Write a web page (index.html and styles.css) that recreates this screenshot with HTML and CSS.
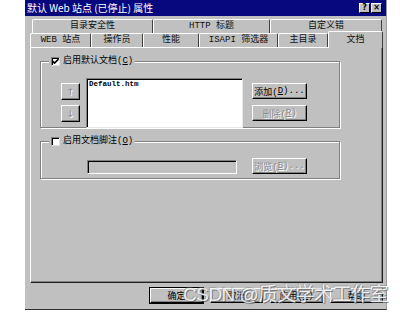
FILE: index.html
```html
<!DOCTYPE html>
<html>
<head>
<meta charset="utf-8">
<link rel="stylesheet" href="styles.css">
</head>
<body>
<div class="dialog">
  <div class="titlebar">
    <span class="title">默认 Web 站点 (已停止) 属性</span>
    <div class="tbtns"><span class="tbtn">?</span><span class="tbtn">×</span></div>
  </div>
  <div class="content">
    <div class="row row1">
      <div class="tab">目录安全性</div>
      <div class="tab">HTTP 标题</div>
      <div class="tab">自定义错</div>
    </div>
    <div class="row row2">
      <div class="tab">WEB 站点</div>
      <div class="tab">操作员</div>
      <div class="tab">性能</div>
      <div class="tab">ISAPI 筛选器</div>
      <div class="tab">主目录</div>
      <div class="tab sel">文挡</div>
    </div>
    <div class="panel">
      <div class="group g1">
        <div class="legend"><span class="cb"><svg width="7" height="7" viewBox="0 0 7 7"><path d="M0.5 3 L2.5 5 L6.5 1" fill="none" stroke="#000" stroke-width="1.6"/></svg></span><span class="ltext">启用默认文档(<u>C</u>)</span></div>
        <div class="g1body">
          <div class="arrows">
            <div class="btn abtn dis">↑</div>
            <div class="btn abtn dis">↓</div>
          </div>
          <div class="list">Default.htm</div>
          <div class="side">
            <div class="btn sbtn">添加(<u>D</u>)...</div>
            <div class="btn sbtn dis">删除(<u>R</u>)</div>
          </div>
        </div>
      </div>
      <div class="group g2">
        <div class="legend"><span class="cb"></span><span class="ltext">启用文档脚注(<u>O</u>)</span></div>
        <div class="g2body">
          <div class="field"></div>
          <div class="btn sbtn dis">浏览(<u>B</u>)...</div>
        </div>
      </div>
    </div>
    <div class="footer">
      <div class="btn fbtn def">确定</div>
      <div class="btn fbtn">取消</div>
      <div class="btn fbtn">应用(<u>A</u>)</div>
      <div class="btn fbtn">帮助</div>
    </div>
  </div>
  <div class="watermark">CSDN @质文学术工作室</div>
</div>
</body>
</html>
```

FILE: styles.css
```css
html, body {
  margin: 0;
  padding: 0;
  background: #ffffff;
}
body {
  width: 400px;
  height: 315px;
  overflow: hidden;
  font-family: "Liberation Mono", "Noto Sans CJK SC", monospace;
  font-size: 9px;
  color: #000;
}
.dialog {
  position: relative;
  margin-left: 25px;
  width: 362px;
  height: 310px;
  box-sizing: border-box;
  background: #c0c0c0;
  border-bottom: 1px solid #303030;
  border-right: 1px solid #9a9a9a;
}
.titlebar {
  height: 16px;
  background: #08087e;
  display: flex;
  align-items: center;
  justify-content: space-between;
  padding: 0 4px 0 2px;
}
.title {
  color: #fff;
  font-family: "Noto Sans CJK SC", sans-serif;
  font-size: 10px;
  line-height: 16px;
  white-space: nowrap;
}
.tbtns {
  display: flex;
  gap: 1px;
}
.tbtn {
  width: 11px;
  height: 10px;
  box-sizing: border-box;
  background: #c0c0c0;
  border-top: 1px solid #fff;
  border-left: 1px solid #fff;
  border-right: 1px solid #000;
  border-bottom: 1px solid #000;
  font-family: "DejaVu Sans", sans-serif;
  font-weight: bold;
  font-size: 8px;
  line-height: 8px;
  text-align: center;
}
.content {
  padding: 3px 0 0 5px;
}
.row {
  display: grid;
  height: 14px;
}
.row1 {
  margin-left: 2px;
  width: 350px;
  grid-template-columns: 121px 117px 112px;
}
.row2 {
  width: 353px;
  grid-template-columns: 61px 52px 56px 79px 50px 55px;
  position: relative;
  z-index: 2;
}
.tab {
  box-sizing: border-box;
  height: 14px;
  border-top: 1px solid #fff;
  border-left: 1px solid #fff;
  border-right: 1px solid #404040;
  border-top-left-radius: 2px;
  border-top-right-radius: 2px;
  text-align: center;
  line-height: 13px;
  white-space: nowrap;
  color: #111;
}
.tab.sel {
  height: 17px;
  margin-top: -2px;
  background: #c0c0c0;
  padding-top: 2px;
  line-height: 12px;
}
.panel {
  box-sizing: border-box;
  width: 353px;
  height: 236px;
  border-top: 1px solid #fff;
  border-left: 1px solid #fff;
  border-right: 1px solid #202020;
  border-bottom: 1px solid #202020;
  box-shadow: inset -1px -1px 0 #808080;
  padding: 13px 0 0 9px;
}
.group {
  box-sizing: border-box;
  width: 300px;
  border: 1px solid #808080;
  box-shadow: inset 1px 1px 0 #fff, 1px 1px 0 #fff;
}
.g1 {
  height: 67px;
}
.g2 {
  height: 38px;
  margin-top: 13px;
}
.legend {
  display: inline-flex;
  align-items: center;
  height: 12px;
  margin-top: -7px;
  margin-left: 8px;
  padding: 0 2px;
  gap: 3px;
  background: #c0c0c0;
  vertical-align: top;
}
.cb {
  width: 9px;
  height: 9px;
  box-sizing: border-box;
  background: #fff;
  border-top: 1px solid #808080;
  border-left: 1px solid #808080;
  border-right: 1px solid #e0e0e0;
  border-bottom: 1px solid #e0e0e0;
  box-shadow: inset 1px 1px 0 #000;
  display: flex;
  align-items: center;
  justify-content: center;
}
.ltext {
  line-height: 12px;
  white-space: nowrap;
}
.g1body {
  display: flex;
  align-items: flex-start;
}
.arrows {
  display: flex;
  flex-direction: column;
  gap: 5px;
  margin: 11px 0 0 20px;
}
.btn {
  box-sizing: border-box;
  background: #c0c0c0;
  border-top: 1px solid #fff;
  border-left: 1px solid #fff;
  border-right: 1px solid #000;
  border-bottom: 1px solid #000;
  box-shadow: inset -1px -1px 0 #808080;
  display: flex;
  align-items: center;
  justify-content: center;
  white-space: nowrap;
}
.dis {
  color: #8a8a8a;
  text-shadow: 1px 1px 0 #fff;
}
.abtn {
  width: 19px;
  height: 17px;
  font-family: "DejaVu Sans", sans-serif;
  font-size: 9px;
}
.list {
  box-sizing: border-box;
  width: 157px;
  height: 50px;
  margin: 6px 0 0 6px;
  background: #fff;
  border-top: 1px solid #808080;
  border-left: 1px solid #808080;
  border-right: 1px solid #e8e8e8;
  border-bottom: 1px solid #e8e8e8;
  box-shadow: inset 1px 1px 0 #000;
  padding: 1px 0 0 2px;
  font-family: "Liberation Mono", monospace;
  font-weight: bold;
  font-size: 7.5px;
  line-height: 9px;
}
.side {
  display: flex;
  flex-direction: column;
  gap: 6px;
  margin: 11px 0 0 9px;
}
.sbtn {
  width: 55px;
  height: 16px;
}
.g2body {
  display: flex;
  align-items: flex-start;
  margin-top: 6px;
}
.field {
  box-sizing: border-box;
  width: 150px;
  height: 14px;
  margin: 2px 0 0 46px;
  background: #c0c0c0;
  border-top: 1px solid #808080;
  border-left: 1px solid #808080;
  border-right: 1px solid #fff;
  border-bottom: 1px solid #fff;
  box-shadow: inset 1px 1px 0 #000;
}
.g2body .sbtn {
  margin-left: 15px;
}
.footer {
  display: flex;
  gap: 7px;
  padding: 5px 0 0 120px;
}
.fbtn {
  width: 53px;
  height: 15px;
}
.fbtn.def {
  outline: 1px solid #000;
  outline-offset: 0;
}
.watermark {
  position: absolute;
  left: 158px;
  top: 284px;
  font-family: "Liberation Sans", "Noto Sans CJK SC", sans-serif;
  font-size: 19px;
  line-height: 22px;
  white-space: nowrap;
  color: rgba(255, 255, 255, 0.85);
  text-shadow: 1px 1px 0 rgba(90, 90, 90, 0.7), -1px -1px 0 rgba(120, 120, 120, 0.4);
  letter-spacing: -0.5px;
}
```
